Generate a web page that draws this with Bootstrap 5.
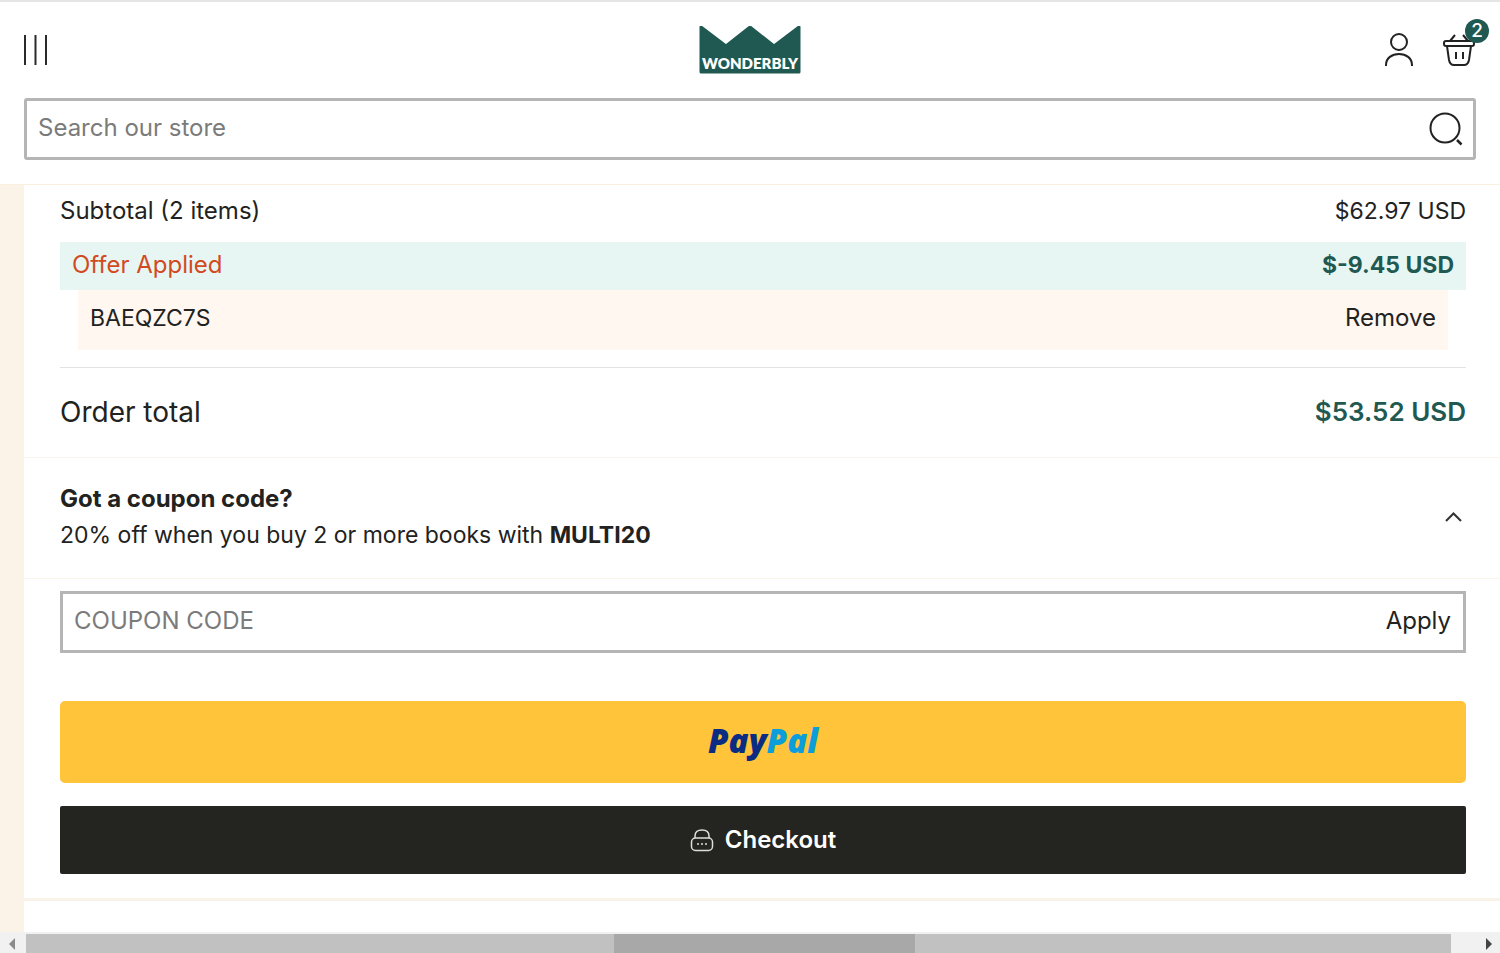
<!DOCTYPE html>
<html lang="en">
<head>
<meta charset="utf-8">
<meta name="viewport" content="width=device-width, initial-scale=1">
<title>Wonderbly – Basket</title>
<link href="https://cdn.jsdelivr.net/npm/bootstrap@5.3.0/dist/css/bootstrap.min.css" rel="stylesheet">
<style>
  :root { --ink: #222220; --forest: #1f5952; --cream: #fbf3e8; --field: #b5b5b5; }
  body { font-family: Inter, "Liberation Sans", sans-serif; font-size: 24px; line-height: 36px; color: var(--ink); background: #fff; }
  svg { display: block; }
  .plain-btn { background: none; border: 0; padding: 0; color: inherit; }
  .text-compact { font-size: 23px; }
  .text-forest { color: var(--forest); }

  .site-header { border-top: 2px solid #e5e5e5; border-bottom: 1px solid #fbf0e0; padding: 0 24px 24px; }
  .masthead { display: grid; grid-template-columns: 1fr auto 1fr; align-items: center; height: 96px; }
  .crown { position: relative; }
  .crown-name { position: absolute; left: 0; right: 0; bottom: 1px; text-align: center; font: 800 15px/20px Lato, sans-serif; color: #fff; }
  .header-icons { gap: 26px; }
  .basket-count { top: -14px; right: -13px; width: 24px; height: 24px; font-size: 19px; line-height: 24px; font-weight: 500; background: var(--forest); }

  .field-box { border: 3px solid var(--field); height: 62px; padding: 0 12px 0 11px; background: #fff; }
  .field-box input { border: 0; outline: 0; background: none; padding: 0 0 4px; color: var(--ink); height: 56px; }
  .field-box input::placeholder { color: #7b7b7b; opacity: 1; }
  .field-box .plain-btn { padding-bottom: 2px; }
  .search-box { border-radius: 3px; padding-right: 10px; }
  .search-box .plain-btn { padding-bottom: 0; }

  .basket-page { border-left: 24px solid var(--cream); }
  .pane { padding-left: 36px; padding-right: 34px; }
  .ruled { border-bottom: 1px solid #faf5ea; }
  .subtotal-row { padding: 8px 0 13px; }
  .offer-row { background: #e7f6f3; padding: 5px 12px 7px; }
  .offer-label { color: #d24a1f; }
  .code-row { background: #fff7f0; margin: 0 18px 17px; padding: 10px 12px 14px; }
  .total-row { border-top: 1px solid #e3e3e3; padding: 26px 0 27px; font-size: 26px; }
  .total-label { font-size: 28px; }
  .coupon-intro { padding-top: 23px; padding-bottom: 25px; }

  .checkout-pane { padding-top: 12px; padding-bottom: 24px; border-bottom: 3px solid #f8f2e8; }
  .coupon-box { margin-bottom: 48px; }
  .pay-btn { border: 0; width: 100%; }
  .paypal-btn { background: #ffc439; border-radius: 5px; height: 82px; margin-bottom: 23px; padding: 0 0 2px; font: italic 800 33px/40px "Open Sans", sans-serif; }
  .pay-dark { color: #0a2d83; }
  .pay-light { color: #0c9ddb; }
  .checkout-btn { background: #242420; color: #fff; border-radius: 2px; height: 68px; gap: 11px; padding-bottom: 2px; }

  .scroll-strip { background: #f1f1f1; height: 21px; padding: 2px 7px 0 8px; }
  .scroll-track { background: #c1c1c1; margin: 0 34px 0 10px; display: grid; grid-template-columns: 588fr 301fr 536fr; }
  .scroll-thumb { background: #a8a8a8; grid-column: 2; }
</style>
</head>
<body>
<div class="d-flex flex-column min-vh-100">
  <header class="site-header">
    <div class="masthead">
      <button class="plain-btn me-auto" type="button" aria-label="Menu">
        <svg width="24" height="30" stroke="#2b2b2b" stroke-width="2"><path d="M1 0v30M11.500 0v30M22 0v30"/></svg>
      </button>
      <a class="crown d-block" href="#" aria-label="Wonderbly">
        <svg width="102" height="48" viewBox="0 0 102 48"><path d="M2 1 27 20 51 1 75 20 100 1V46H2Z" fill="#1f5952" stroke="#1f5952" stroke-width="3" stroke-linejoin="round"/></svg>
        <span class="crown-name">WONDERBLY</span>
      </a>
      <div class="header-icons d-flex ms-auto align-items-center">
        <a href="#" aria-label="Account">
          <svg width="34" height="34" viewBox="0 0 34 34" fill="none" stroke="#222" stroke-width="2"><circle cx="17" cy="9" r="8"/><path d="M4 33v-1c0-7 6-11 13-11s13 4 13 11v1"/></svg>
        </a>
        <a class="position-relative" href="#" aria-label="Basket, 2 items">
          <svg width="34" height="34" viewBox="0 0 34 34" fill="none" stroke="#222" stroke-width="2" stroke-linejoin="round"><rect x="2" y="8" width="30" height="5" rx="2"/><path d="m8 8 5-6M26 8l-5-6M5 13l2 14q1 5 5 5h10q4 0 5-5l2-14M14 19v7M21 19v7"/></svg>
          <span class="basket-count position-absolute rounded-circle text-white text-center">2</span>
        </a>
      </div>
    </div>
    <form class="field-box search-box d-flex align-items-center" role="search">
      <input class="flex-grow-1" type="search" placeholder="Search our store" aria-label="Search our store">
      <button class="plain-btn" type="button" aria-label="Search">
        <svg width="34" height="34" viewBox="0 0 34 34" fill="none" stroke="#222" stroke-width="2"><circle cx="16" cy="16" r="14.500"/><path d="m28 28 4.500 4.500" stroke-width="2.500"/></svg>
      </button>
    </form>
  </header>

  <main class="basket-page flex-grow-1">
    <section class="pane ruled">
      <div class="subtotal-row d-flex justify-content-between">
        <span>Subtotal (2 items)</span><span class="text-compact">$62.97 USD</span>
      </div>
      <div class="offer-row d-flex justify-content-between">
        <span class="offer-label">Offer Applied</span><span class="text-forest text-compact fw-bold">$-9.45 USD</span>
      </div>
      <div class="code-row d-flex justify-content-between">
        <span class="text-compact">BAEQZC7S</span><button class="plain-btn" type="button">Remove</button>
      </div>
      <div class="total-row d-flex justify-content-between">
        <span class="total-label">Order total</span><span class="text-forest fw-semibold">$53.52 USD</span>
      </div>
    </section>

    <section class="pane coupon-intro ruled d-flex justify-content-between align-items-center">
      <div>
        <div class="fw-bold">Got a coupon code?</div>
        <div class="text-compact">20% off when you buy 2 or more books with <b>MULTI20</b></div>
      </div>
      <button class="plain-btn me-1" type="button" aria-label="Hide coupon form">
        <svg width="17" height="10" fill="none" stroke="#333" stroke-width="2"><path d="m1 9 7.500-7.500L16 9"/></svg>
      </button>
    </section>

    <section class="pane checkout-pane">
      <form class="field-box coupon-box d-flex align-items-center">
        <input class="flex-grow-1" type="text" placeholder="COUPON CODE" aria-label="Coupon code">
        <button class="plain-btn" type="button">Apply</button>
      </form>
      <button class="pay-btn paypal-btn d-flex align-items-center justify-content-center" type="button" aria-label="PayPal"><span class="pay-dark">Pay</span><span class="pay-light">Pal</span></button>
      <button class="pay-btn checkout-btn d-flex align-items-center justify-content-center fw-semibold" type="button">
        <svg width="24" height="24" viewBox="0 0 24 24" fill="none" stroke="#ddd" stroke-width="1.500"><rect x="1.500" y="10" width="21" height="12.500" rx="4"/><path d="M5 10V8q0-6 7-6t7 6v2"/><path d="M7 16h2M11 16h2M15 16h2"/></svg>
        Checkout
      </button>
    </section>
  </main>

  <div class="scroll-strip d-flex" aria-hidden="true">
    <svg width="8" height="19"><path d="M7 4v12L1 10Z" fill="#8c8c8c"/></svg>
    <div class="scroll-track flex-grow-1"><div class="scroll-thumb"></div></div>
    <svg width="8" height="19"><path d="M1 4v12l6-6Z" fill="#444"/></svg>
  </div>
</div>
<script src="https://cdn.jsdelivr.net/npm/bootstrap@5.3.0/dist/js/bootstrap.bundle.min.js"></script>
</body>
</html>
